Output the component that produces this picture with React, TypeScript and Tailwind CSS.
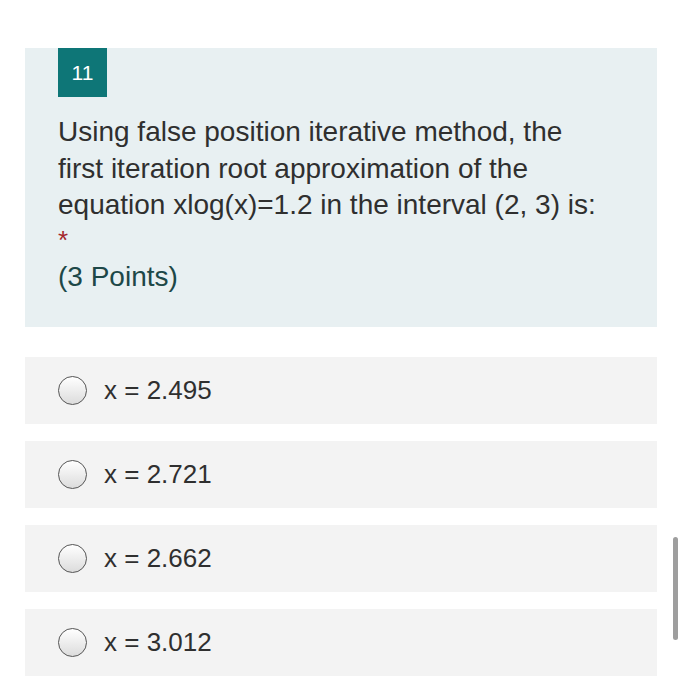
const options = ['x = 2.495', 'x = 2.721', 'x = 2.662', 'x = 3.012'];

function Radio() {
  return (
    <span className="w-[29px] h-[29px] shrink-0 rounded-full border-[1.5px] border-[#555] bg-gradient-to-b from-white to-[#dcdcdc]" />
  );
}

export default function App() {
  return (
    <div
      className="relative w-[682px] h-[700px] bg-white overflow-hidden pt-[48px] px-[25px]"
      style={{ fontFamily: '"Liberation Sans", Arial, sans-serif' }}
    >
      <section className="w-[632px] bg-[#e8f0f2] px-[33px] pb-[32px]">
        <div className="w-[49px] h-[49px] bg-[#0e7677] flex items-center justify-center text-white text-[21px]">
          11
        </div>
        <p className="mt-[17px] text-[28px] leading-[36.5px] text-[#2f2f2f] whitespace-nowrap">
          Using false position iterative method, the
          <br />
          first iteration root approximation of the
          <br />
          equation xlog(x)=1.2 in the interval (2, 3) is:
        </p>
        <div className="text-[26px] leading-[26px] text-[#a4262c] mt-[3px]">*</div>
        <div className="mt-[6px] text-[28px] leading-[36px] text-[#1d4848]">(3 Points)</div>
      </section>

      <div className="mt-[30px] flex flex-col gap-[17px] w-[632px]">
        {options.map((o) => (
          <div key={o} className="h-[67px] bg-[#f3f3f3] flex items-center pl-[33px] gap-[17px]">
            <Radio />
            <span className="text-[26px] text-[#2f2f2f]">{o}</span>
          </div>
        ))}
      </div>

      <div className="absolute left-[673px] top-[537px] w-[5px] h-[103px] rounded-full bg-[#9e9e9e]" />
    </div>
  );
}
